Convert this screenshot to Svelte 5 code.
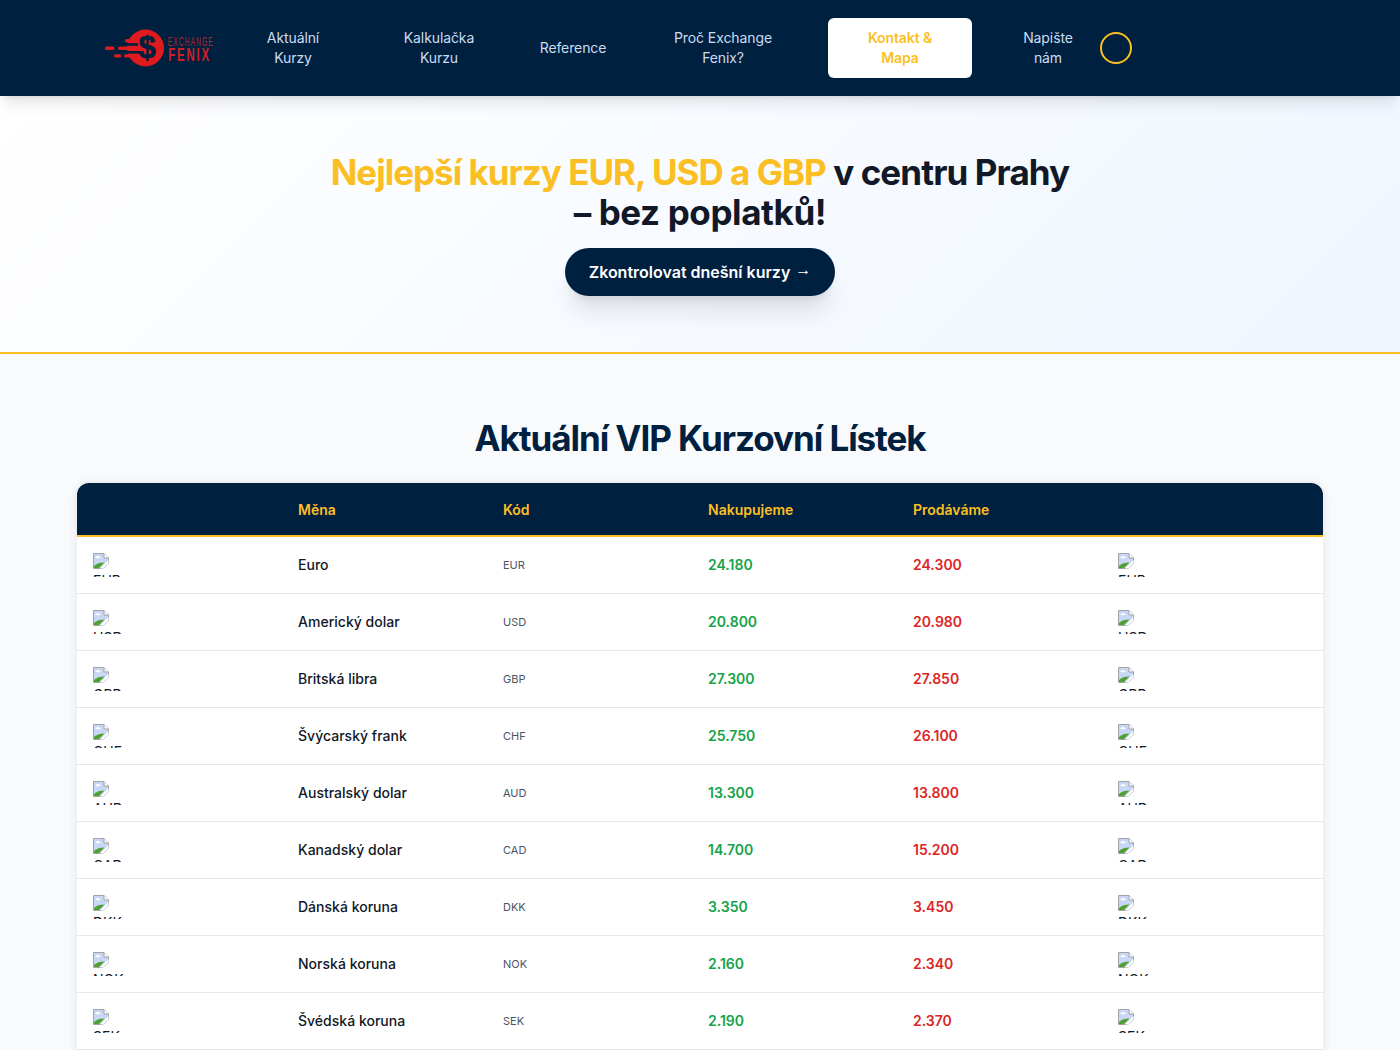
<script>
  const nav = [
    { label: 'Aktuální Kurzy', cls: 'w1' },
    { label: 'Kalkulačka Kurzu', cls: 'w2' },
    { label: 'Reference', cls: 'w3' },
    { label: 'Proč Exchange Fenix?', cls: 'w4' },
    { label: 'Kontakt & Mapa', cls: 'w5 active' },
    { label: 'Napište nám', cls: 'w6' }
  ];
  const rows = [
    ['Euro', 'EUR', '24.180', '24.300'],
    ['Americký dolar', 'USD', '20.800', '20.980'],
    ['Britská libra', 'GBP', '27.300', '27.850'],
    ['Švýcarský frank', 'CHF', '25.750', '26.100'],
    ['Australský dolar', 'AUD', '13.300', '13.800'],
    ['Kanadský dolar', 'CAD', '14.700', '15.200'],
    ['Dánská koruna', 'DKK', '3.350', '3.450'],
    ['Norská koruna', 'NOK', '2.160', '2.340'],
    ['Švédská koruna', 'SEK', '2.190', '2.370']
  ];
</script>

{#snippet flag(code)}
  <span class="flag">
    <svg class="broken" width="16" height="16" viewBox="0 0 16 16">
      <path d="M0.5 0.5H11L15.5 5V10L10 15.5H0.5Z" fill="#c7d7f5" stroke="#a3a3a3" />
      <path d="M11 0.5V5H15.5" fill="#fff" stroke="#a3a3a3" />
      <path d="M2 4.5C4 2.5 6 2.5 8 4.5C7 5.5 3 5.5 2 4.5Z" fill="#fff" />
      <path d="M1 15V13C3.5 10.5 7 9.5 11.5 9.5L6 15Z" fill="#4ea02f" />
      <path d="M15.5 7L7 15.5H10L15.5 10Z" fill="#fff" />
    </svg>
    <span class="alt">{code}</span>
  </span>
{/snippet}

<div class="page">
  <header class="top">
    <div class="logo">
      <svg width="110" height="40" viewBox="0 0 110 40">
        <circle cx="41.5" cy="20" r="18.5" fill="#e01b1f" />
        <g fill="#002040">
          <rect x="20" y="15.2" width="14" height="2.6" />
          <rect x="20" y="23" width="16" height="2.6" />
        </g>
        <g fill="#e01b1f">
          <rect x="1" y="18.4" width="9.5" height="3.6" rx="1.8" />
          <rect x="10" y="26.2" width="7.5" height="3.4" rx="1.7" />
          <rect x="14" y="18.4" width="20" height="3.6" rx="1.8" />
          <rect x="21" y="11" width="17" height="3.6" rx="1.8" />
          <rect x="20" y="26.2" width="16" height="3.4" rx="1.7" />
        </g>
        <text x="43" y="30" class="dollar">$</text>
        <text x="127.4" y="17.7" class="ex" transform="scale(0.5 1)" textLength="90" lengthAdjust="spacing">EXCHANGE</text>
        <text x="103.7" y="33.2" class="fx" transform="scale(0.62 1)" textLength="66" lengthAdjust="spacing">FENIX</text>
      </svg>
    </div>
    <nav class="menu">
      {#each nav as item}
        <a class="item {item.cls}" href="#top">{item.label}</a>
      {/each}
    </nav>
    <span class="ring"></span>
  </header>

  <section class="hero">
    <h1><span class="gold">Nejlepší kurzy EUR, USD a GBP</span> v centru Prahy<br /><span class="second">– bez poplatků!</span></h1>
    <a class="cta" href="#top">Zkontrolovat dnešní kurzy <span class="arrow">→</span></a>
  </section>

  <main class="rates">
    <h2>Aktuální VIP Kurzovní Lístek</h2>
    <div class="card">
      <table>
        <thead>
          <tr>
            <th></th><th>Měna</th><th>Kód</th><th>Nakupujeme</th><th>Prodáváme</th><th></th>
          </tr>
        </thead>
        <tbody>
          {#each rows as r}
            <tr>
              <td>{@render flag(r[1])}</td>
              <td class="name">{r[0]}</td>
              <td class="code">{r[1]}</td>
              <td class="buy">{r[2]}</td>
              <td class="sell">{r[3]}</td>
              <td>{@render flag(r[1])}</td>
            </tr>
          {/each}
        </tbody>
      </table>
    </div>
  </main>
</div>

<style>
  :global(body) {
    margin: 0;
    background: #f8fafc;
    font-family: "Inter", "Noto Sans", sans-serif;
    color: #111827;
    overflow: hidden;
  }
  .page {
    height: 1050px;
    overflow: hidden;
  }
  .top {
    height: 96px;
    background: #002040;
    display: flex;
    align-items: center;
    padding-left: 104px;
    box-shadow: 0 10px 15px -3px rgba(0, 0, 0, 0.1), 0 4px 6px -4px rgba(0, 0, 0, 0.1);
    position: relative;
    z-index: 2;
  }
  .logo {
    width: 110px;
    height: 40px;
    flex: none;
  }
  .logo svg { display: block; }
  .dollar {
    font: 700 31px "Liberation Sans", sans-serif;
    fill: #002040;
    stroke: #002040;
    stroke-width: 0.6;
    text-anchor: middle;
  }
  .ex {
    font: 400 13.5px "Liberation Sans", sans-serif;
    fill: #b3252c;
  }
  .fx {
    font: 700 18.5px "Liberation Sans", sans-serif;
    fill: #cc2028;
  }
  .menu {
    display: flex;
    align-items: center;
    margin-left: 20px;
  }
  .item {
    display: flex;
    align-items: center;
    justify-content: center;
    text-align: center;
    text-decoration: none;
    color: #cbdcf0;
    font-size: 14px;
    line-height: 20px;
    letter-spacing: -0.1px;
    height: 60px;
    box-sizing: border-box;
    border-radius: 6px;
    padding: 0 16px;
    flex: none;
  }
  .w1 { width: 118px; padding: 0 32px; }
  .w2 { width: 146px; padding: 0 32px; margin-left: 14px; margin-right: -14px; }
  .w3 { width: 122px; margin-left: 14px; margin-right: -14px; }
  .w4 { width: 150px; padding: 0 16px; margin-left: 28px; }
  .w5 { width: 144px; padding: 0 32px; margin-left: 30px; }
  .w6 { width: 120px; padding: 0 32px; margin-left: 16px; }
  .active {
    background: #fff;
    color: #fbbf24;
    font-weight: 600;
  }
  .ring {
    width: 32px;
    height: 32px;
    box-sizing: border-box;
    border: 2px solid #fbbf24;
    border-radius: 50%;
    margin-left: -8px;
    flex: none;
  }
  .hero {
    height: 258px;
    box-sizing: border-box;
    border-bottom: 2px solid #fbbf24;
    background: linear-gradient(135deg, #ffffff, #eff6ff);
    display: flex;
    flex-direction: column;
    align-items: center;
    padding-top: 56px;
  }
  h1 {
    margin: 0;
    width: 800px;
    text-align: center;
    font-size: 35px;
    line-height: 40px;
    font-weight: 700;
    letter-spacing: -0.9px;
    color: #111827;
  }
  .second { letter-spacing: -0.4px; }
  .gold { color: #fbbf24; letter-spacing: -1px; }
  .cta {
    margin-top: 16px;
    width: 270px;
    height: 48px;
    box-sizing: border-box;
    display: flex;
    align-items: center;
    justify-content: center;
    gap: 5px;
    border-radius: 24px;
    background: #002040;
    color: #fff;
    font-size: 16px;
    font-weight: 600;
    text-decoration: none;
    box-shadow: 0 20px 25px -5px rgba(0, 0, 0, 0.1), 0 8px 10px -6px rgba(0, 0, 0, 0.1);
  }
  .arrow {
    font-family: "Liberation Sans", sans-serif;
    font-weight: 400;
    font-size: 16px;
    margin-top: -4px;
  }
  .rates {
    padding: 64px 77px 0;
  }
  h2 {
    margin: 0 0 25px;
    text-align: center;
    font-size: 35px;
    line-height: 40px;
    font-weight: 700;
    letter-spacing: -1.05px;
    color: #002040;
  }
  .card {
    background: #fff;
    border-radius: 12px;
    overflow: hidden;
    padding-bottom: 16px;
    box-shadow: 0 0 10px rgba(0, 32, 64, 0.1);
  }
  table {
    width: 1246px;
    table-layout: fixed;
    border-collapse: collapse;
    font-size: 14px;
  }
  th, td {
    box-sizing: border-box;
    width: 205px;
    padding: 0 0 0 16px;
    text-align: left;
  }
  th:last-child, td:last-child { width: 221px; }
  th {
    height: 53px;
    background: #002040;
    color: #fbbf24;
    font-weight: 600;
    border-bottom: 2px solid #fbbf24;
  }
  td {
    height: 57px;
    border-bottom: 1px solid #e5e7eb;
  }
  .name { font-weight: 500; color: #111827; letter-spacing: 0.02px; }
  .code { font-size: 11px; color: #4b5563; }
  .buy { font-weight: 600; color: #16a34a; }
  .sell { font-weight: 600; color: #dc2626; }
  .flag {
    display: block;
    width: 40px;
    height: 24px;
    overflow: hidden;
    font-size: 14px;
    line-height: 20px;
    color: #111827;
  }
  .broken { display: block; }
  .alt { display: block; margin-top: 2px; }
</style>
